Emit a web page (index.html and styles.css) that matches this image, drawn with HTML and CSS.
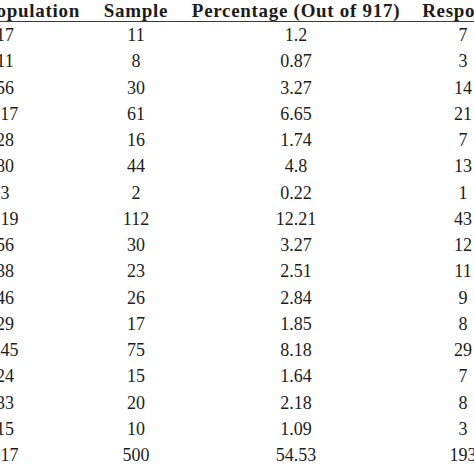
FILE: index.html
```html
<!DOCTYPE html>
<html>
<head>
<meta charset="utf-8">
<title>Sample distribution</title>
<link rel="stylesheet" href="styles.css">
</head>
<body>
<table class="sample-table">
	<colgroup>
		<col class="c-pop">
		<col class="c-sample">
		<col class="c-pct">
		<col class="c-resp">
	</colgroup>
	<thead>
		<tr>
			<th class="pop">Population</th>
			<th>Sample</th>
			<th>Percentage (Out of 917)</th>
			<th>Response</th>
		</tr>
	</thead>
	<tbody>
		<tr><td class="pop">17</td><td>11</td><td>1.2</td><td>7</td></tr>
		<tr><td class="pop">11</td><td>8</td><td>0.87</td><td>3</td></tr>
		<tr><td class="pop">56</td><td>30</td><td>3.27</td><td>14</td></tr>
		<tr><td class="pop">117</td><td>61</td><td>6.65</td><td>21</td></tr>
		<tr><td class="pop">28</td><td>16</td><td>1.74</td><td>7</td></tr>
		<tr><td class="pop">80</td><td>44</td><td>4.8</td><td>13</td></tr>
		<tr><td class="pop">3</td><td>2</td><td>0.22</td><td>1</td></tr>
		<tr><td class="pop">219</td><td>112</td><td>12.21</td><td>43</td></tr>
		<tr><td class="pop">56</td><td>30</td><td>3.27</td><td>12</td></tr>
		<tr><td class="pop">38</td><td>23</td><td>2.51</td><td>11</td></tr>
		<tr><td class="pop">46</td><td>26</td><td>2.84</td><td>9</td></tr>
		<tr><td class="pop">29</td><td>17</td><td>1.85</td><td>8</td></tr>
		<tr><td class="pop">145</td><td>75</td><td>8.18</td><td>29</td></tr>
		<tr><td class="pop">24</td><td>15</td><td>1.64</td><td>7</td></tr>
		<tr><td class="pop">33</td><td>20</td><td>2.18</td><td>8</td></tr>
		<tr><td class="pop">15</td><td>10</td><td>1.09</td><td>3</td></tr>
		<tr><td class="pop">917</td><td>500</td><td>54.53</td><td>193</td></tr>
	</tbody>
</table>
</body>
</html>
```

FILE: styles.css
```css
body {
	margin: 0;
	overflow: hidden;
	background-color: #ffffff;
	color: #1c1c1c;
	font-family: "Liberation Serif", "Times New Roman", serif;
}
.sample-table {
	border-collapse: collapse;
	table-layout: fixed;
	width: 574px;
	margin-left: -60px;
}
.c-pop { width: 152px; }
.c-sample { width: 88px; }
.c-pct { width: 232px; }
.c-resp { width: 102px; }

th {
	font-size: 19px;
	font-weight: bold;
	letter-spacing: 0.7px;
	line-height: 21px;
	height: 21px;
	padding: 0;
	text-align: center;
	white-space: nowrap;
	border-bottom: 1px solid #3a3a3a;
}
th.pop {
	text-align: right;
	padding-right: 12px;
}
td {
	font-size: 18px;
	line-height: 26.25px;
	padding: 0;
	text-align: center;
	white-space: nowrap;
}
td.pop {
	padding-right: 22px;
}
```
